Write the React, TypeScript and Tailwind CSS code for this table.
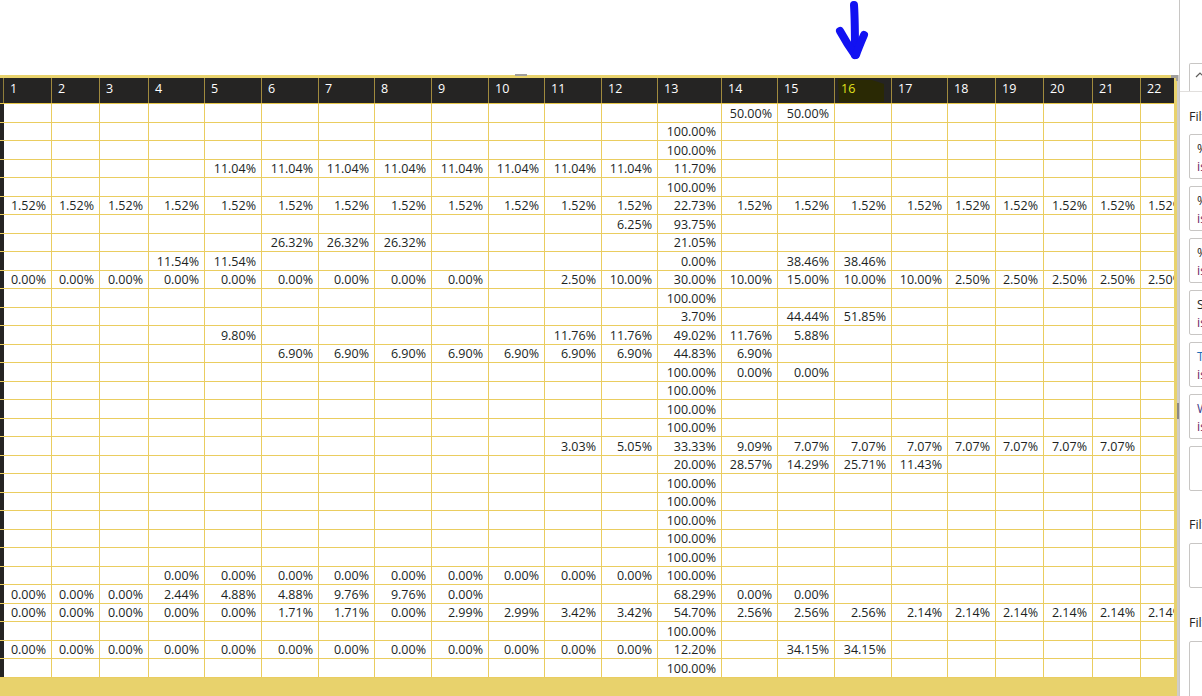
import React from "react";

// column widths of the matrix visual (px), columns 1..22
const COLS = [48, 48, 49, 56, 57, 57, 56, 57, 57, 56, 57, 56, 64, 56, 57, 57, 56, 48, 48, 49, 48, 48];

type Row = Record<number, string>;

const span = (from: number, to: number, v: string): Row => {
  const r: Row = {};
  for (let i = from; i <= to; i++) r[i] = v;
  return r;
};

const ALL = { 13: "100.00%" };

const ROWS: Row[] = [
  { 14: "50.00%", 15: "50.00%" },
  ALL,
  ALL,
  { ...span(5, 12, "11.04%"), 13: "11.70%" },
  ALL,
  { ...span(1, 22, "1.52%"), 13: "22.73%" },
  { 12: "6.25%", 13: "93.75%" },
  { ...span(6, 8, "26.32%"), 13: "21.05%" },
  { 4: "11.54%", 5: "11.54%", 13: "0.00%", 15: "38.46%", 16: "38.46%" },
  {
    ...span(1, 9, "0.00%"),
    11: "2.50%",
    12: "10.00%",
    13: "30.00%",
    14: "10.00%",
    15: "15.00%",
    16: "10.00%",
    17: "10.00%",
    ...span(18, 22, "2.50%"),
  },
  ALL,
  { 13: "3.70%", 15: "44.44%", 16: "51.85%" },
  { 5: "9.80%", 11: "11.76%", 12: "11.76%", 13: "49.02%", 14: "11.76%", 15: "5.88%" },
  { ...span(6, 12, "6.90%"), 13: "44.83%", 14: "6.90%" },
  { 13: "100.00%", 14: "0.00%", 15: "0.00%" },
  ALL,
  ALL,
  ALL,
  { 11: "3.03%", 12: "5.05%", 13: "33.33%", 14: "9.09%", ...span(15, 21, "7.07%") },
  { 13: "20.00%", 14: "28.57%", 15: "14.29%", 16: "25.71%", 17: "11.43%" },
  ALL,
  ALL,
  ALL,
  ALL,
  ALL,
  { ...span(4, 12, "0.00%"), 13: "100.00%" },
  {
    ...span(1, 3, "0.00%"),
    4: "2.44%",
    5: "4.88%",
    6: "4.88%",
    7: "9.76%",
    8: "9.76%",
    9: "0.00%",
    13: "68.29%",
    14: "0.00%",
    15: "0.00%",
  },
  {
    ...span(1, 5, "0.00%"),
    6: "1.71%",
    7: "1.71%",
    8: "0.00%",
    9: "2.99%",
    10: "2.99%",
    11: "3.42%",
    12: "3.42%",
    13: "54.70%",
    14: "2.56%",
    15: "2.56%",
    16: "2.56%",
    ...span(17, 22, "2.14%"),
  },
  ALL,
  { ...span(1, 12, "0.00%"), 13: "12.20%", 15: "34.15%", 16: "34.15%" },
  ALL,
];

const FILTER_CARDS = [
  { name: "% Complete", color: "text-[#252423]" },
  { name: "% Of Total", color: "text-[#252423]" },
  { name: "% Variance", color: "text-[#252423]" },
  { name: "Status", color: "text-[#252423]" },
  { name: "Task", color: "text-[#1e6fb8]" },
  { name: "Week", color: "text-[#3f3a86]" },
  { name: "", color: "text-[#252423]" },
];

function FilterCard({ name, color }: { name: string; color: string }) {
  return (
    <div className="h-[45px] w-[150px] shrink-0 rounded-[2px] border border-[#c8c6c4] pl-[7px] pt-[5px] leading-[18px] whitespace-nowrap">
      {name && (
        <>
          <div className={color}>{name}</div>
          <div className="text-[#6b2463]">is (All)</div>
        </>
      )}
    </div>
  );
}

export default function App() {
  return (
    <div className="relative flex h-[696px] w-[1202px] overflow-hidden bg-white font-['Open_Sans','Liberation_Sans',sans-serif] text-[12.5px]">
      {/* ---- report canvas ---- */}
      <div className="flex w-[1179px] shrink-0 flex-col">
        <div className="h-[75px] shrink-0" />
        <div className="relative flex min-h-0 flex-1">
          <div className="flex w-[1177px] flex-col border-t-[3px] border-r-[3px] border-[#e8d26c] bg-[#e8d26c]">
            <div className="w-[1174px] overflow-hidden bg-white">
              {/* header */}
              <div className="flex h-[26px] border-b border-[#e6c64a] bg-[#252423]">
                <div className="w-[4px] shrink-0 border-r border-[#8f7d3a]" />
                {COLS.map((w, i) => (
                  <div
                    key={i}
                    style={{ width: w }}
                    className="relative shrink-0 border-r border-[#a08a3e] pl-[6px] pt-[2px] leading-[18px] text-white"
                  >
                    {i === 15 && (
                      <svg className="absolute left-[1px] top-0" width="50" height="25" viewBox="0 0 50 25">
                        <path d="M2 1 L36 2 L48 6 L48 24 L3 24 Z" fill="#2a2904" />
                      </svg>
                    )}
                    <span className={"relative " + (i === 15 ? "text-[#e2e41c]" : "")}>{i + 1}</span>
                  </div>
                ))}
              </div>

              {/* rows */}
              {ROWS.map((row, r) => (
                <div key={r} className="flex h-[18.5px] border-b border-[#eacd60]">
                  <div className="w-[4px] shrink-0 bg-[#252423]" />
                  {COLS.map((w, i) => (
                    <div
                      key={i}
                      style={{ width: w }}
                      className="flex shrink-0 items-center justify-end overflow-hidden whitespace-nowrap border-r border-[#eacd60] pr-[5px] pt-[1px] leading-[17px] text-[#201f1e]"
                    >
                      {row[i + 1] ?? ""}
                    </div>
                  ))}
                </div>
              ))}
            </div>
          </div>

          {/* scroll track */}
          <div className="relative w-[2px] bg-[#cfcdca]">
            <div className="absolute left-0 top-[328px] h-[16px] w-[2px] bg-[#8a8886]" />
          </div>

          {/* visual grip + corner */}
          <div className="absolute left-[515px] top-[-1px] h-[2px] w-[12px] bg-[#a19f9d]" />
          <div className="absolute left-[1171px] top-0 h-[3px] w-[7px] bg-[#a19f9d]" />
          <div className="absolute left-[1176px] top-0 h-[6px] w-[2px] bg-[#a19f9d]" />
        </div>
      </div>

      {/* ---- filters pane ---- */}
      <aside className="flex min-w-0 flex-1 flex-col overflow-hidden border-l border-[#c8c6c4] text-[#252423]">
        <div className="h-[92px] shrink-0 border-b border-[#e1dfdd] pl-[9px] pt-[63px]">
          <div className="flex h-[28px] w-[40px] rounded-t-[2px] border border-b-0 border-[#c8c6c4] pl-[5px] pt-[7px]">
            <svg width="10" height="8" viewBox="0 0 10 8">
              <path d="M1 6 L5 2 L9 6" fill="none" stroke="#605e5c" strokeWidth="1.2" />
            </svg>
          </div>
        </div>
        <div className="flex flex-col pl-[9px]">
          <div className="mt-[17px] h-[16px] whitespace-nowrap leading-[16px]">Filters on this visual</div>
          <div className="mt-[9px] flex flex-col gap-[7px]">
            {FILTER_CARDS.map((c, i) => (
              <FilterCard key={i} name={c.name} color={c.color} />
            ))}
          </div>
          <div className="mt-[26px] h-[16px] whitespace-nowrap leading-[16px]">Filters on this page</div>
          <div className="mt-[10px]">
            <FilterCard name="" color="" />
          </div>
          <div className="mt-[27px] h-[16px] whitespace-nowrap leading-[16px]">Filters on all pages</div>
          <div className="mt-[10px]">
            <div className="h-[60px] w-[150px] rounded-[2px] border border-[#c8c6c4]" />
          </div>
        </div>
      </aside>

      {/* hand-drawn arrow annotation */}
      <svg className="absolute left-[832px] top-0" width="40" height="64" viewBox="0 0 40 64">
        <g fill="none" stroke="#1212f2" strokeWidth="8" strokeLinecap="round" strokeLinejoin="round">
          <path d="M22 5 C23 20 23 40 23 55" />
          <path d="M8 31 C13 40 18 48 23 55" />
          <path d="M32 35 C29 42 26 49 24 55" />
        </g>
      </svg>
    </div>
  );
}
